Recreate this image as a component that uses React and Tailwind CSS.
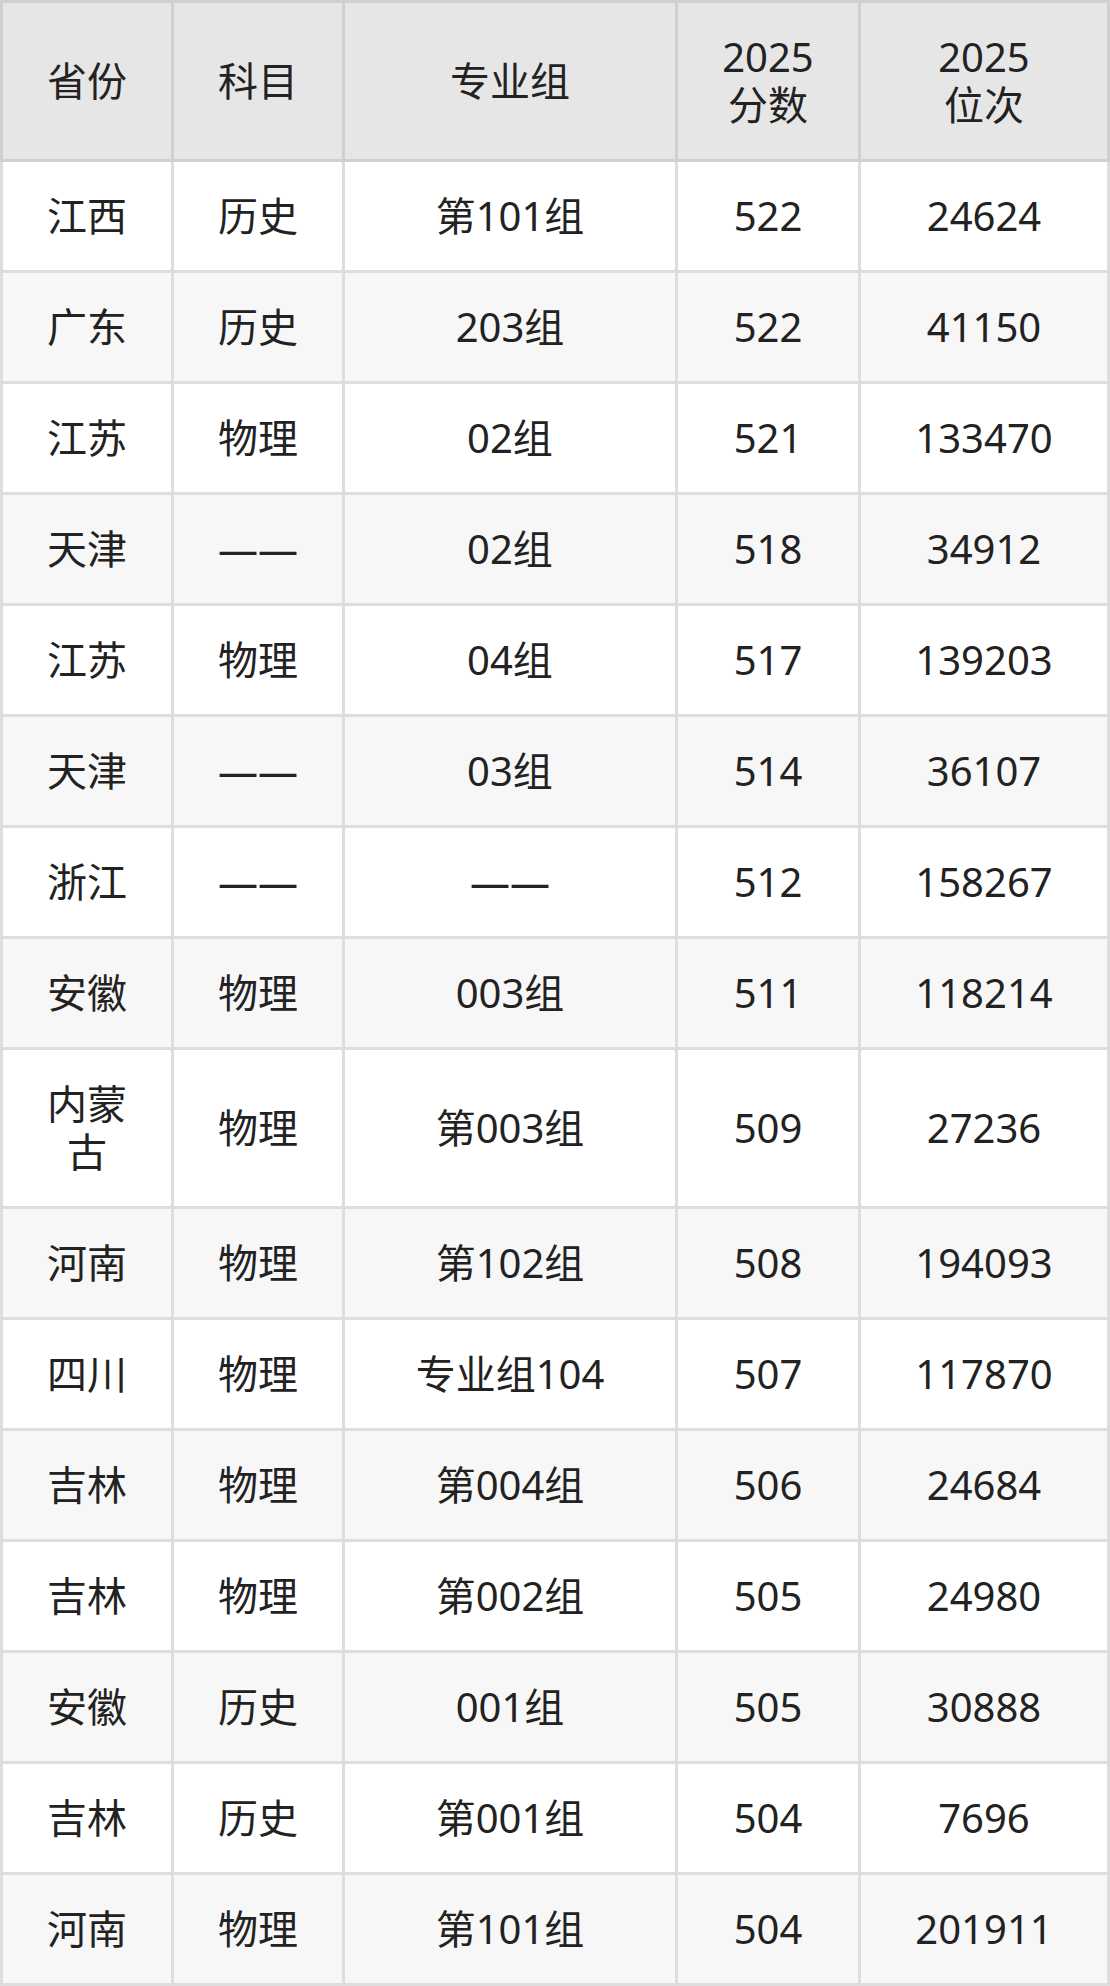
import React from "react";

const rows = [
  ["江西", "历史", "第101组", "522", "24624"],
  ["广东", "历史", "203组", "522", "41150"],
  ["江苏", "物理", "02组", "521", "133470"],
  ["天津", "——", "02组", "518", "34912"],
  ["江苏", "物理", "04组", "517", "139203"],
  ["天津", "——", "03组", "514", "36107"],
  ["浙江", "——", "——", "512", "158267"],
  ["安徽", "物理", "003组", "511", "118214"],
  ["内蒙古", "物理", "第003组", "509", "27236"],
  ["河南", "物理", "第102组", "508", "194093"],
  ["四川", "物理", "专业组104", "507", "117870"],
  ["吉林", "物理", "第004组", "506", "24684"],
  ["吉林", "物理", "第002组", "505", "24980"],
  ["安徽", "历史", "001组", "505", "30888"],
  ["吉林", "历史", "第001组", "504", "7696"],
  ["河南", "物理", "第101组", "504", "201911"],
];

const App = () => {
  return (
    <div className="w-[1110px] bg-white font-['Noto_Sans','Noto_Sans_CJK_SC',sans-serif] text-[40px] leading-[48px] text-[#222]">
      <table className="w-full table-fixed border-collapse">
        <colgroup>
          <col className="w-[171px]" />
          <col className="w-[171px]" />
          <col className="w-[333px]" />
          <col className="w-[183px]" />
          <col />
        </colgroup>
        <thead>
          <tr className="bg-[#e6e6e6]">
            <th className="border-[3px] border-[#d0d0d0] px-[28px] py-[30px] font-normal">省份</th>
            <th className="border-[3px] border-[#d0d0d0] px-[28px] py-[30px] font-normal">科目</th>
            <th className="border-[3px] border-[#d0d0d0] px-[28px] py-[30px] font-normal">专业组</th>
            <th className="border-[3px] border-[#d0d0d0] px-[28px] py-[30px] font-normal">
              2025
              <br />
              分数
            </th>
            <th className="border-[3px] border-[#d0d0d0] px-[28px] py-[30px] font-normal">
              2025
              <br />
              位次
            </th>
          </tr>
        </thead>
        <tbody>
          {rows.map((r, i) => (
            <tr key={i} className={i % 2 === 0 ? "bg-white" : "bg-[#f7f7f7]"}>
              {r.map((c, j) => (
                <td key={j} className="border-[3px] border-[#dddddd] px-[28px] py-[30px] text-center">
                  {c}
                </td>
              ))}
            </tr>
          ))}
        </tbody>
      </table>
    </div>
  );
};

export default App;
